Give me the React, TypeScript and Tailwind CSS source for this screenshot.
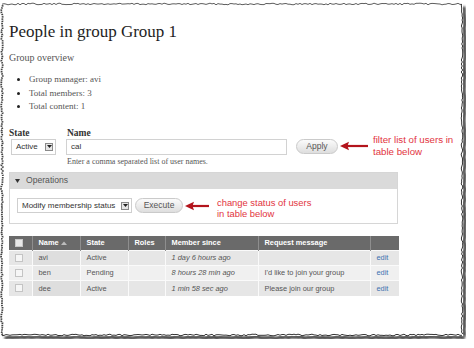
import React from "react";

function rng(seed: number) {
  let s = seed;
  return () => {
    s = (s * 1103515245 + 12345) % 2147483648;
    return s / 2147483648;
  };
}

function edge(points: [number, number][]) {
  return "M" + points.map((p) => p[0].toFixed(1) + " " + p[1].toFixed(1)).join(" L");
}

const X0 = 2, Y0 = 4, X1 = 462, Y1 = 335;

function buildEdges() {
  const r = rng(7);
  const top: [number, number][] = [];
  for (let x = X0; x <= X1; x += 2) top.push([x, Y0 + (r() - 0.5) * 1.6]);
  const right: [number, number][] = [];
  for (let y = Y0; y <= Y1; y += 2) right.push([X1 + (r() - 0.5) * 1.6, y]);
  const bottom: [number, number][] = [];
  for (let x = X1; x >= X0; x -= 2) bottom.push([x, Y1 + (r() - 0.5) * 1.6]);
  const left: [number, number][] = [];
  for (let y = Y1; y >= Y0; y -= 2) left.push([X0 + (r() - 0.5) * 1.8, y]);
  return { top, right, bottom, left };
}

const E = buildEdges();

function Frame() {
  const shR = E.right.map((p) => [p[0] + 2.5, p[1] + 2.5] as [number, number]);
  const shB = E.bottom.map((p) => [p[0] + 2.5, p[1] + 2.5] as [number, number]);
  return (
    <svg className="pointer-events-none absolute left-0 top-0" width="474" height="348" viewBox="0 0 474 348">
      <defs>
        <filter id="bl" x="-5%" y="-5%" width="110%" height="110%">
          <feGaussianBlur stdDeviation="0.9" />
        </filter>
      </defs>
      <path d={edge(shR)} stroke="#3a3a3a" strokeWidth="3.2" fill="none" filter="url(#bl)" />
      <path d={edge(shB)} stroke="#3a3a3a" strokeWidth="3.2" fill="none" filter="url(#bl)" />
      <path d={edge(E.top)} stroke="#333" strokeWidth="0.8" fill="none" />
      <path d={edge(E.right)} stroke="#333" strokeWidth="1" fill="none" />
      <path d={edge(E.bottom)} stroke="#333" strokeWidth="1" fill="none" />
      <path d={edge(E.left)} stroke="#444" strokeWidth="1.8" fill="none" strokeDasharray="1.5 0.8" />
    </svg>
  );
}

function DropArrow() {
  return (
    <span className="flex h-[8px] w-[8px] items-center justify-center border border-[#8a8a8a] bg-[#e6e6e6]">
      <svg width="5" height="3" viewBox="0 0 5 3">
        <path d="M0 0 L5 0 L2.5 3 Z" fill="#222" />
      </svg>
    </span>
  );
}

function RedArrow({ w }: { w: number }) {
  return (
    <svg width={w} height="10" viewBox={`0 0 ${w} 10`}>
      <path d={`M7 5 L${w} 5`} stroke="#b3141c" strokeWidth="2.2" />
      <path d="M0 5 L9 0.8 L7.5 5 L9 9.2 Z" fill="#b3141c" />
    </svg>
  );
}

function Check({ head }: { head?: boolean }) {
  return (
    <span
      className={
        head
          ? "block h-[8px] w-[8px] border border-[#c8c8c8] bg-[#e8e8e8]"
          : "block h-[8px] w-[8px] border border-[#c4c4c4] bg-[#f6f6f6]"
      }
    />
  );
}

const rows = [
  { name: "avi", state: "Active", since: "1 day 6 hours ago", msg: "", bg: "bg-[#e6e6e6]", act: "bg-[#dedede]" },
  { name: "ben", state: "Pending", since: "8 hours 28 min ago", msg: "I'd like to join your group", bg: "bg-[#f0f0f0]", act: "bg-[#e8e8e8]" },
  { name: "dee", state: "Active", since: "1 min 58 sec ago", msg: "Please join our group", bg: "bg-[#e6e6e6]", act: "bg-[#dedede]" },
];

export default function App() {
  return (
    <div className="relative h-[348px] w-[474px] overflow-hidden bg-white">
      <div className="ml-[2px] mt-[4px] h-[331px] w-[460px] bg-white pl-[7px] font-['Liberation_Serif',serif]">
        <h1 className="pt-[18px] text-[17px] leading-[20px] text-[#1e1e1e]">People in group Group 1</h1>
        <p className="mt-[9px] text-[10px] leading-[14px] text-[#555]">Group overview</p>
        <ul className="mt-[8px] list-disc pl-[20px] text-[9px] leading-[13.5px] text-[#555] marker:text-[#222]">
          <li>Group manager: avi</li>
          <li>Total members: 3</li>
          <li>Total content: 1</li>
        </ul>

        <div className="mt-[13px] flex">
          <div className="w-[57px]">
            <div className="text-[9.5px] font-bold leading-[12px] text-[#333]">State</div>
            <div className="ml-[2px] flex h-[16px] w-[45px] items-center border border-[#cfcfcf] bg-white pl-[4px] pr-[2px] font-['Liberation_Sans',sans-serif] text-[8px] text-[#333]">
              <span>Active</span>
              <span className="ml-auto">
                <DropArrow />
              </span>
            </div>
          </div>
          <div className="w-[221px]">
            <div className="pl-[1px] text-[9.5px] font-bold leading-[12px] text-[#333]">Name</div>
            <div className="flex h-[16px] w-[221px] items-center border border-[#d2d2d2] bg-white pl-[4px] font-['Liberation_Sans',sans-serif] text-[8px] text-[#333]">
              cal
            </div>
            <div className="mt-[1px] pl-[1px] text-[8px] leading-[11px] text-[#555]">Enter a comma separated list of user names.</div>
          </div>
          <div className="ml-[9px] mt-[12px]">
            <div className="flex h-[15px] w-[42px] items-center justify-center rounded-full border border-[#cacaca] bg-gradient-to-b from-[#fbfbfb] to-[#dedede] font-['Liberation_Sans',sans-serif] text-[8.5px] text-[#555]">
              Apply
            </div>
          </div>
          <div className="ml-[2px] mt-[14px]">
            <RedArrow w={28} />
          </div>
          <div className="ml-[5px] mt-[7px] font-['Liberation_Sans',sans-serif] text-[9.7px] leading-[12px] text-[#e2343e]">
            <div>filter list of users in</div>
            <div>table below</div>
          </div>
        </div>

        <div className="mt-[5px] w-[389px] border border-[#d6d6d6] font-['Liberation_Sans',sans-serif]">
          <div className="flex h-[16px] items-center bg-[#dadada] pl-[5px] text-[8.6px] text-[#555]">
            <svg width="5" height="4" viewBox="0 0 5 4">
              <path d="M0 0 L5 0 L2.5 4 Z" fill="#333" />
            </svg>
            <span className="ml-[6px]">Operations</span>
          </div>
          <div className="flex h-[34px] items-center bg-white pl-[7px]">
            <div className="flex h-[15px] w-[115px] items-center whitespace-nowrap border border-[#cfcfcf] bg-white pl-[4px] pr-[2px] text-[8px] text-[#333]">
              <span>Modify membership status</span>
              <span className="ml-auto">
                <DropArrow />
              </span>
            </div>
            <div className="ml-[3px] flex h-[15px] w-[48px] items-center justify-center rounded-full border border-[#cacaca] bg-gradient-to-b from-[#fbfbfb] to-[#dedede] text-[8.5px] text-[#555]">
              Execute
            </div>
            <div className="ml-[2px]">
              <RedArrow w={24} />
            </div>
            <div className="ml-[8px] mt-[5px] whitespace-nowrap text-[9.4px] leading-[11px] text-[#e2343e]">
              <div>change status of users</div>
              <div>in table below</div>
            </div>
          </div>
        </div>

        <table className="mt-[12px] w-[390px] table-fixed border-collapse font-['Liberation_Sans',sans-serif] text-[7.4px]">
          <colgroup>
            <col className="w-[23px]" />
            <col className="w-[48px]" />
            <col className="w-[48px]" />
            <col className="w-[37px]" />
            <col className="w-[93px]" />
            <col className="w-[112px]" />
            <col className="w-[29px]" />
          </colgroup>
          <thead>
            <tr className="h-[15px] bg-[#6a6a6a] text-left font-bold text-white">
              <th className="border-r border-[#8e8e8e] pl-[6px]">
                <Check head />
              </th>
              <th className="border-r border-[#8e8e8e] pl-[6px]">
                <span className="flex items-center">
                  Name
                  <svg className="ml-[2px]" width="6" height="4" viewBox="0 0 6 4">
                    <path d="M0 4 L3 0.5 L6 4 Z" fill="#bdbdbd" />
                  </svg>
                </span>
              </th>
              <th className="border-r border-[#8e8e8e] pl-[6px]">State</th>
              <th className="border-r border-[#8e8e8e] pl-[6px]">Roles</th>
              <th className="border-r border-[#8e8e8e] pl-[6px]">Member since</th>
              <th className="border-r border-[#8e8e8e] pl-[6px]">Request message</th>
              <th className="pl-[6px]"></th>
            </tr>
          </thead>
          <tbody className="text-[#555]">
            {rows.map((r) => (
              <tr key={r.name} className={"h-[15px] border-t border-[#fafafa] " + r.bg}>
                <td className="border-r border-[#fafafa] pl-[6px]">
                  <Check />
                </td>
                <td className={"border-r border-[#fafafa] pl-[6px] " + r.act}>{r.name}</td>
                <td className="border-r border-[#fafafa] pl-[6px]">{r.state}</td>
                <td className="border-r border-[#fafafa] pl-[6px]"></td>
                <td className="border-r border-[#fafafa] pl-[6px] italic">{r.since}</td>
                <td className="border-r border-[#fafafa] pl-[6px]">{r.msg}</td>
                <td className="pl-[6px] text-[#3d72b0]">edit</td>
              </tr>
            ))}
          </tbody>
        </table>
      </div>
      <Frame />
    </div>
  );
}
